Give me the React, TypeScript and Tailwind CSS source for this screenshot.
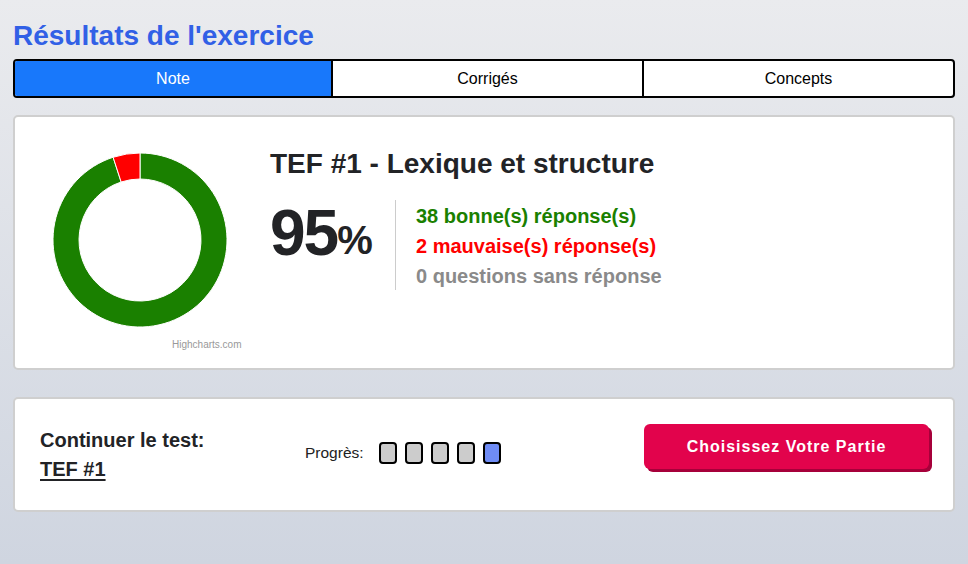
import React from "react";

function Donut() {
  const cx = 90, cy = 90, R = 87, r = 61;
  const pt = (rad: number, deg: number) => {
    const a = (deg - 90) * Math.PI / 180;
    return [cx + rad * Math.cos(a), cy + rad * Math.sin(a)];
  };
  const arc = (a0: number, a1: number) => {
    const [x0, y0] = pt(R, a0);
    const [x1, y1] = pt(R, a1);
    const [x2, y2] = pt(r, a1);
    const [x3, y3] = pt(r, a0);
    const large = a1 - a0 > 180 ? 1 : 0;
    return `M${x0} ${y0} A${R} ${R} 0 ${large} 1 ${x1} ${y1} L${x2} ${y2} A${r} ${r} 0 ${large} 0 ${x3} ${y3} Z`;
  };
  return (
    <svg width="180" height="180" viewBox="0 0 180 180">
      <path d={arc(0, 342)} fill="#1a8000" stroke="#fff" strokeWidth="1" />
      <path d={arc(342, 360)} fill="#ff0000" stroke="#fff" strokeWidth="1" />
    </svg>
  );
}

export default function App() {
  return (
    <div
      className="min-h-[564px] w-full bg-gradient-to-b from-[#eaebee] to-[#cfd5e0] px-[13px] pt-[20px] pb-[50px]"
      style={{ fontFamily: '"Liberation Sans", Arial, sans-serif' }}
    >
      <h1 className="text-[28px] font-bold leading-[32px] text-[#3160e6]">Résultats de l'exercice</h1>
      <div className="mt-[7px] flex h-[39px] overflow-hidden rounded-[4px] border-2 border-black bg-white text-[16px] text-black">
        <div className="flex w-[318px] items-center justify-center border-r-2 border-black bg-[#1878fb] text-white">Note</div>
        <div className="flex w-[311px] items-center justify-center border-r-2 border-black">Corrigés</div>
        <div className="flex flex-1 items-center justify-center">Concepts</div>
      </div>

      <div className="mt-[17px] flex h-[255px] rounded-[5px] border-2 border-[#cfcfcf] bg-white">
        <div className="relative ml-[35px] mt-[33px] h-[200px] w-[200px]">
          <Donut />
          <div className="absolute left-[122px] top-[189px] text-[10px] leading-[12px] text-[#999]">Highcharts.com</div>
        </div>
        <div className="ml-[20px] mt-[29px] flex flex-col">
          <div className="text-[28px] font-bold leading-[36px] text-[#222326]">TEF #1 - Lexique et structure</div>
          <div className="mt-[18px] flex">
            <div className="flex h-[90px] w-[126px] items-start border-r border-[#cccccc] pt-[1px]">
              <span className="text-[64px] font-bold leading-[64px] tracking-[-2px] text-[#222326]">95</span>
              <span className="mt-[18px] text-[40px] font-bold leading-[42px] text-[#222326]">%</span>
            </div>
            <div className="ml-[20px] mt-[1px] flex flex-col text-[20px] font-bold leading-[30px]">
              <span className="text-[#1a8000]">38 bonne(s) réponse(s)</span>
              <span className="text-[#ff0000]">2 mauvaise(s) réponse(s)</span>
              <span className="text-[#8a8a8a]">0 questions sans réponse</span>
            </div>
          </div>
        </div>
      </div>

      <div className="mt-[27px] flex h-[115px] items-center rounded-[5px] border-2 border-[#cfcfcf] bg-white">
        <div className="ml-[25px] flex w-[240px] flex-col text-[20px] font-bold leading-[29px] text-[#222326]">
          <span>Continuer le test:</span>
          <span className="underline underline-offset-[3px] w-fit">TEF #1</span>
        </div>
        <div className="ml-[25px] mt-[-3px] flex items-center">
          <span className="text-[15.5px] text-[#222]">Progrès:</span>
          <div className="ml-[15px] flex gap-[8px]">
            <div className="h-[22px] w-[18px] rounded-[4px] border-2 border-black bg-[#cccccc]" />
            <div className="h-[22px] w-[18px] rounded-[4px] border-2 border-black bg-[#cccccc]" />
            <div className="h-[22px] w-[18px] rounded-[4px] border-2 border-black bg-[#cccccc]" />
            <div className="h-[22px] w-[18px] rounded-[4px] border-2 border-black bg-[#cccccc]" />
            <div className="h-[22px] w-[18px] rounded-[4px] border-2 border-black bg-[#6f8cf5]" />
          </div>
        </div>
        <div className="ml-auto mr-[24px] mt-[-16px]">
          <button className="flex h-[45px] w-[285px] items-center justify-center rounded-[6px] bg-[#e2034c] text-[16px] font-bold tracking-[1px] text-white shadow-[3px_3px_0_#a6003a]">
            Choisissez Votre Partie
          </button>
        </div>
      </div>
    </div>
  );
}
